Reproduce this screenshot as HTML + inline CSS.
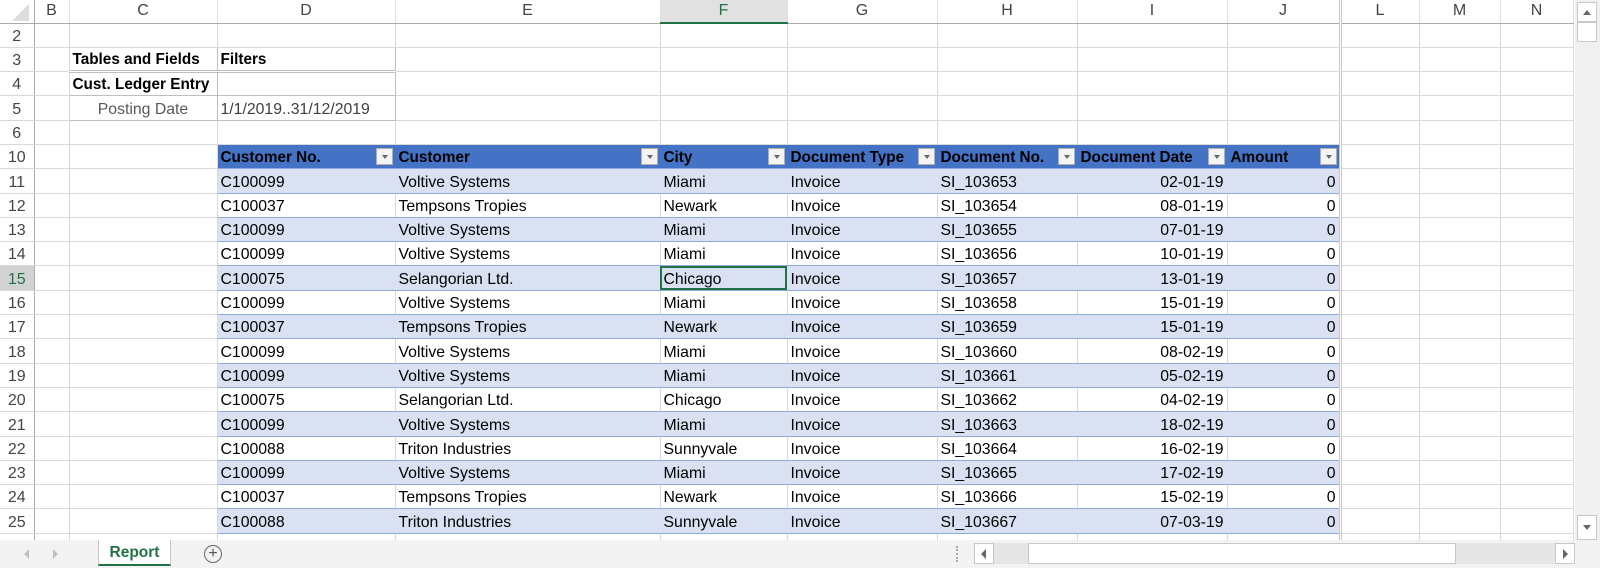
<!DOCTYPE html>
<html><head><meta charset="utf-8"><style>
*{margin:0;padding:0;box-sizing:border-box}
body{width:1600px;height:568px;overflow:hidden;background:#fff;font-family:"Liberation Sans",Arial,sans-serif;position:relative}
#wrap{position:absolute;left:0;top:0;width:1575px;height:540px;overflow:hidden}
table{border-collapse:collapse;table-layout:fixed;width:1573px}
td{height:24.3px;border-right:1px solid #d9d9d9;border-bottom:1px solid #d9d9d9;font-size:15.8px;color:#000;padding:0 3px 0 3px;white-space:nowrap;overflow:hidden;position:relative;line-height:20px;vertical-align:bottom}
tr.h td{height:23px;text-align:center;color:#444;font-size:16px;border-bottom:1px solid #ababab;border-right:1px solid #e1e1e1;vertical-align:middle}
td.rh{text-align:center;color:#444;font-size:16px;border-right:1px solid #ababab;padding:0}
tr.h td.rh{border-right:1px solid #ababab}
td.sel{background:#d2d2d2;color:#217346}
tr.h td.sel{background:#e1e1e1;border-bottom:2px solid #217346;color:#217346}
.b td.t{background:#d9e1f2}
td.t{border-bottom:1px solid #8ea9db;border-right:1px solid #d9d9d9}
.b td.t{border-right:1px solid #d9e1f2}
td.r{text-align:right}
td.hd{background:#4472c4;font-weight:bold;font-size:15.3px;border-right:1px solid #4472c4;border-bottom:1px solid #8ea9db}
td.j{border-right:1px solid #8ea9db!important}
td.k{border-left:3px double #c8c8c8}
.dd{position:absolute;right:2px;top:3px;width:17px;height:17px;background:#f4f4f4;border:1px solid #b0b0b0}
.dd:after{content:"";position:absolute;left:5px;top:6px;border-left:3px solid transparent;border-right:3px solid transparent;border-top:4px solid #666}
.bx{border:1px solid #bfbfbf}
.bd{font-weight:bold;font-size:15.3px}
#bar{position:absolute;left:0;top:540px;width:1600px;height:28px;background:#f3f3f3}
#vs{position:absolute;left:1575px;top:0;width:25px;height:540px;background:#f0f0f0}
</style></head><body>
<div id="wrap"><table>
<colgroup><col style="width:34px"><col style="width:35px"><col style="width:148px"><col style="width:178px"><col style="width:265px"><col style="width:127px"><col style="width:150px"><col style="width:140px"><col style="width:150px"><col style="width:113px"><col style="width:79px"><col style="width:81px"><col style="width:73px"></colgroup>
<tr class="h"><td class="rh" style="background:#fff"><svg width="30" height="20" style="position:absolute;left:2px;top:2px"><path d="M27 2 L27 19 L10 19 Z" fill="#dcdcdc"/></svg></td><td>B</td><td>C</td><td>D</td><td>E</td><td class="sel">F</td><td>G</td><td>H</td><td>I</td><td>J</td><td class="k">L</td><td>M</td><td>N</td></tr>
<tr><td class="rh">2</td><td></td><td></td><td></td><td></td><td></td><td></td><td></td><td></td><td></td><td class="k"></td><td></td><td></td></tr>
<tr><td class="rh">3</td><td></td><td class="bd" style="border:1px solid #bfbfbf;border-bottom:3px double #bfbfbf">Tables and Fields</td><td class="bd" style="border:1px solid #bfbfbf;border-bottom:3px double #bfbfbf">Filters</td><td></td><td></td><td></td><td></td><td></td><td></td><td class="k"></td><td></td><td></td></tr>
<tr><td class="rh">4</td><td></td><td class="bx bd">Cust. Ledger Entry</td><td class="bx"></td><td></td><td></td><td></td><td></td><td></td><td></td><td class="k"></td><td></td><td></td></tr>
<tr><td class="rh">5</td><td></td><td class="bx" style="text-align:center;color:#595959">Posting Date</td><td class="bx" style="color:#404040">1/1/2019..31/12/2019</td><td></td><td></td><td></td><td></td><td></td><td></td><td class="k"></td><td></td><td></td></tr>
<tr><td class="rh">6</td><td></td><td></td><td></td><td></td><td></td><td></td><td></td><td></td><td></td><td class="k"></td><td></td><td></td></tr>
<tr><td class="rh">10</td><td></td><td></td><td class="hd">Customer No.<span class="dd"></span></td><td class="hd">Customer<span class="dd"></span></td><td class="hd">City<span class="dd"></span></td><td class="hd">Document Type<span class="dd"></span></td><td class="hd">Document No.<span class="dd"></span></td><td class="hd">Document Date<span class="dd"></span></td><td class="hd j">Amount<span class="dd"></span></td><td class="k"></td><td></td><td></td></tr>
<tr class="b"><td class="rh">11</td><td></td><td></td><td class="t">C100099</td><td class="t">Voltive Systems</td><td class="t">Miami</td><td class="t">Invoice</td><td class="t">SI_103653</td><td class="t r">02-01-19</td><td class="t r j">0</td><td class="k"></td><td></td><td></td></tr>
<tr><td class="rh">12</td><td></td><td></td><td class="t">C100037</td><td class="t">Tempsons Tropies</td><td class="t">Newark</td><td class="t">Invoice</td><td class="t">SI_103654</td><td class="t r">08-01-19</td><td class="t r j">0</td><td class="k"></td><td></td><td></td></tr>
<tr class="b"><td class="rh">13</td><td></td><td></td><td class="t">C100099</td><td class="t">Voltive Systems</td><td class="t">Miami</td><td class="t">Invoice</td><td class="t">SI_103655</td><td class="t r">07-01-19</td><td class="t r j">0</td><td class="k"></td><td></td><td></td></tr>
<tr><td class="rh">14</td><td></td><td></td><td class="t">C100099</td><td class="t">Voltive Systems</td><td class="t">Miami</td><td class="t">Invoice</td><td class="t">SI_103656</td><td class="t r">10-01-19</td><td class="t r j">0</td><td class="k"></td><td></td><td></td></tr>
<tr class="b"><td class="rh sel">15</td><td></td><td></td><td class="t">C100075</td><td class="t">Selangorian Ltd.</td><td class="t" style="outline:2px solid #217346;outline-offset:-2px">Chicago</td><td class="t">Invoice</td><td class="t">SI_103657</td><td class="t r">13-01-19</td><td class="t r j">0</td><td class="k"></td><td></td><td></td></tr>
<tr><td class="rh">16</td><td></td><td></td><td class="t">C100099</td><td class="t">Voltive Systems</td><td class="t">Miami</td><td class="t">Invoice</td><td class="t">SI_103658</td><td class="t r">15-01-19</td><td class="t r j">0</td><td class="k"></td><td></td><td></td></tr>
<tr class="b"><td class="rh">17</td><td></td><td></td><td class="t">C100037</td><td class="t">Tempsons Tropies</td><td class="t">Newark</td><td class="t">Invoice</td><td class="t">SI_103659</td><td class="t r">15-01-19</td><td class="t r j">0</td><td class="k"></td><td></td><td></td></tr>
<tr><td class="rh">18</td><td></td><td></td><td class="t">C100099</td><td class="t">Voltive Systems</td><td class="t">Miami</td><td class="t">Invoice</td><td class="t">SI_103660</td><td class="t r">08-02-19</td><td class="t r j">0</td><td class="k"></td><td></td><td></td></tr>
<tr class="b"><td class="rh">19</td><td></td><td></td><td class="t">C100099</td><td class="t">Voltive Systems</td><td class="t">Miami</td><td class="t">Invoice</td><td class="t">SI_103661</td><td class="t r">05-02-19</td><td class="t r j">0</td><td class="k"></td><td></td><td></td></tr>
<tr><td class="rh">20</td><td></td><td></td><td class="t">C100075</td><td class="t">Selangorian Ltd.</td><td class="t">Chicago</td><td class="t">Invoice</td><td class="t">SI_103662</td><td class="t r">04-02-19</td><td class="t r j">0</td><td class="k"></td><td></td><td></td></tr>
<tr class="b"><td class="rh">21</td><td></td><td></td><td class="t">C100099</td><td class="t">Voltive Systems</td><td class="t">Miami</td><td class="t">Invoice</td><td class="t">SI_103663</td><td class="t r">18-02-19</td><td class="t r j">0</td><td class="k"></td><td></td><td></td></tr>
<tr><td class="rh">22</td><td></td><td></td><td class="t">C100088</td><td class="t">Triton Industries</td><td class="t">Sunnyvale</td><td class="t">Invoice</td><td class="t">SI_103664</td><td class="t r">16-02-19</td><td class="t r j">0</td><td class="k"></td><td></td><td></td></tr>
<tr class="b"><td class="rh">23</td><td></td><td></td><td class="t">C100099</td><td class="t">Voltive Systems</td><td class="t">Miami</td><td class="t">Invoice</td><td class="t">SI_103665</td><td class="t r">17-02-19</td><td class="t r j">0</td><td class="k"></td><td></td><td></td></tr>
<tr><td class="rh">24</td><td></td><td></td><td class="t">C100037</td><td class="t">Tempsons Tropies</td><td class="t">Newark</td><td class="t">Invoice</td><td class="t">SI_103666</td><td class="t r">15-02-19</td><td class="t r j">0</td><td class="k"></td><td></td><td></td></tr>
<tr class="b"><td class="rh">25</td><td></td><td></td><td class="t">C100088</td><td class="t">Triton Industries</td><td class="t">Sunnyvale</td><td class="t">Invoice</td><td class="t">SI_103667</td><td class="t r">07-03-19</td><td class="t r j">0</td><td class="k"></td><td></td><td></td></tr>
<tr><td class="rh">26</td><td></td><td></td><td class="t"></td><td class="t"></td><td class="t"></td><td class="t"></td><td class="t"></td><td class="t"></td><td class="t j"></td><td class="k"></td><td></td><td></td></tr>
</table></div>
<div id="vs">
 <div style="position:absolute;left:2px;top:2px;width:20px;height:20px;background:#fff;border:1px solid #c8c8c8"><div style="position:absolute;left:5px;top:7px;border-left:4px solid transparent;border-right:4px solid transparent;border-bottom:5px solid #666"></div></div>
 <div style="position:absolute;left:2px;top:22px;width:20px;height:20px;background:#fff;border:1px solid #c8c8c8"></div>
 <div style="position:absolute;left:2px;top:515px;width:20px;height:25px;background:#fff;border:1px solid #c8c8c8"><div style="position:absolute;left:5px;top:9px;border-left:4px solid transparent;border-right:4px solid transparent;border-top:5px solid #666"></div></div>
</div>
<div id="bar">
 <div style="position:absolute;left:24px;top:9px;border-top:5px solid transparent;border-bottom:5px solid transparent;border-right:5px solid #c0c0c0"></div>
 <div style="position:absolute;left:53px;top:9px;border-top:5px solid transparent;border-bottom:5px solid transparent;border-left:5px solid #c0c0c0"></div>
 <div style="position:absolute;left:98px;top:0;width:73px;height:26px;background:#fff;border-left:1px solid #c8c8c8;border-right:1px solid #c8c8c8;border-bottom:2px solid #217346;text-align:center;font-weight:bold;color:#217346;font-size:15.5px;line-height:25px">Report</div>
 <div style="position:absolute;left:204px;top:5px;width:18px;height:18px;border:1px solid #666;border-radius:50%;text-align:center;line-height:15px;font-size:16px;color:#555">+</div>
 <div style="position:absolute;left:956px;top:6px;width:2px;height:16px;border-left:2px dotted #aaa"></div>
 <div style="position:absolute;left:974px;top:3px;width:601px;height:21px;background:#e6e6e6"></div>
 <div style="position:absolute;left:974px;top:3px;width:20px;height:21px;background:#fff;border:1px solid #c8c8c8"><div style="position:absolute;left:6px;top:5px;border-top:5px solid transparent;border-bottom:5px solid transparent;border-right:5px solid #666"></div></div>
 <div style="position:absolute;left:1028px;top:3px;width:428px;height:21px;background:#fff;border:1px solid #c8c8c8"></div>
 <div style="position:absolute;left:1555px;top:3px;width:20px;height:21px;background:#fff;border:1px solid #c8c8c8"><div style="position:absolute;left:7px;top:5px;border-top:5px solid transparent;border-bottom:5px solid transparent;border-left:5px solid #666"></div></div>
</div>
</body></html>
